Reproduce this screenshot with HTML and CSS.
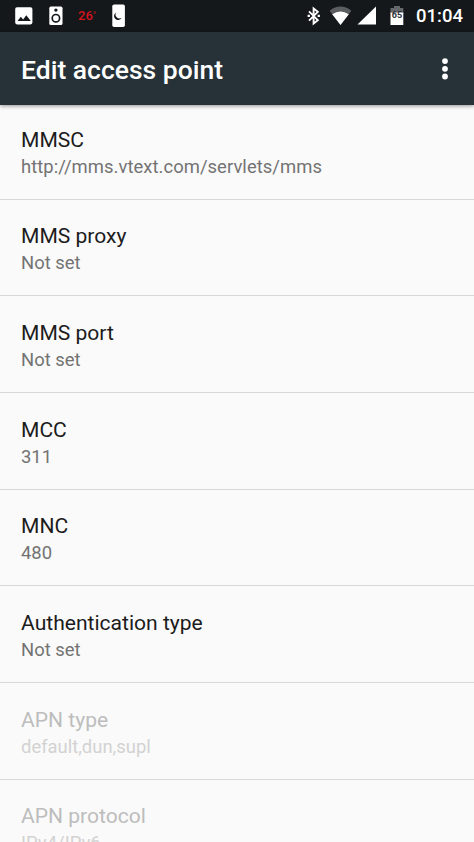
FILE: index.html
```html
<!DOCTYPE html>
<html lang="en">
<head>
<meta charset="utf-8">
<title>Edit access point</title>
<link rel="stylesheet" href="styles.css">
</head>
<body>
<div class="screen">
  <div class="status">
    <svg class="picture" width="18" height="18" viewBox="0 0 18 18"><rect x=".2" y=".2" width="17.2" height="17.2" rx="1.8" fill="#fff"/><path d="M2.5 14l3.3-4.3 2.3 2.8 3.2-4.2 4.5 5.7z" fill="#14181b"/></svg>
    <svg class="speaker" width="14" height="20" viewBox="0 0 14 20"><rect x=".3" y=".6" width="13.2" height="18.4" rx="1.6" fill="#fff"/><circle cx="6.9" cy="4.1" r="1.7" fill="#14181b"/><circle cx="6.9" cy="12.2" r="3.7" fill="none" stroke="#14181b" stroke-width="1.7"/></svg>
    <span class="temp">26<span class="degree">°</span></span>
    <svg class="night" width="14" height="24" viewBox="0 0 14 24"><rect x=".3" y=".4" width="12.6" height="22.6" rx="1.8" fill="#fff"/><path d="M4.2 8.4A3.9 3.9 0 0 0 9.6 13.8A4 4 0 1 1 4.2 8.4z" fill="#14181b"/></svg>
    <span class="spacer"></span>
    <svg class="bluetooth" width="14" height="20" viewBox="0 0 14 20"><path d="M2 5.4l8.8 8.8L6.6 17.6V2.4l4.2 3.4L2 14.6" fill="none" stroke="#fff" stroke-width="1.9"/><path d="M.6 8.8h2.3v2.3H.6zM10.6 8.8h2.3v2.3h-2.3z" fill="#fff"/></svg>
    <svg class="wifi" width="23" height="20" viewBox="0 0 23 20"><path d="M.6 4.8Q11.5-3.6 22.4 4.8L11.5 19z" fill="#5b5e60"/><path d="M3.2 8.2Q11.5 3 19.8 8.2L11.5 19z" fill="#fff"/></svg>
    <svg class="signal" width="20" height="20" viewBox="0 0 20 20"><path d="M19 .6V18.6H.5z" fill="#fff"/></svg>
    <span class="battery"><svg width="14" height="20" viewBox="0 0 14 20"><path d="M4 0h6v2h3.3v6H.5V2H4z" fill="#64686a"/><path d="M.5 6.6h12.8V19H.5z" fill="#fff"/></svg><span class="level">65</span></span>
    <span class="clock">01:04</span>
  </div>
  <header class="bar">
    <h1>Edit access point</h1>
    <svg width="8" height="24" viewBox="0 0 8 24"><g fill="#fff"><circle cx="4" cy="4.1" r="2.9"/><circle cx="4" cy="11.8" r="2.9"/><circle cx="4" cy="19.5" r="2.9"/></g></svg>
  </header>
  <main class="list">
    <div class="row"><div class="name">MMSC</div><div class="value url">http://mms.vtext.com/servlets/mms</div></div>
    <div class="row"><div class="name">MMS proxy</div><div class="value">Not set</div></div>
    <div class="row"><div class="name">MMS port</div><div class="value">Not set</div></div>
    <div class="row"><div class="name">MCC</div><div class="value">311</div></div>
    <div class="row"><div class="name">MNC</div><div class="value">480</div></div>
    <div class="row"><div class="name">Authentication type</div><div class="value">Not set</div></div>
    <div class="row disabled"><div class="name">APN type</div><div class="value">default,dun,supl</div></div>
    <div class="row disabled"><div class="name">APN protocol</div><div class="value">IPv4/IPv6</div></div>
  </main>
</div>
</body>
</html>
```
FILE: styles.css
```css
* { box-sizing: border-box; }
body { margin: 0; font-family: Roboto, "Liberation Sans", sans-serif; background: #fafafa; }
.screen { height: 842px; overflow: hidden; display: flex; flex-direction: column; }
.status { height: 32px; flex: none; display: flex; align-items: center; background: #14181b; padding: 0 11px 0 15px; color: #fff; }
.status svg { display: block; flex: none; }
.speaker { margin-left: 16px; }
.temp { margin-left: 15px; width: 19px; color: #d5141b; font-size: 13px; font-weight: 500; line-height: 32px; white-space: nowrap; }
.degree { font-size: 9px; font-weight: 400; vertical-align: 2px; line-height: 1; }
.night { margin-left: 15px; }
.spacer { flex: 1; }
.bluetooth { margin-right: 8px; }
.wifi { margin-right: 5px; }
.signal { margin-right: 13px; }
.battery { position: relative; margin-right: 12px; }
.level { position: absolute; left: 0; top: 4px; width: 14px; text-align: center; font-size: 9px; line-height: 11px; font-weight: 700; color: #2b3033; }
.clock { width: 47px; font-size: 18.5px; font-weight: 500; line-height: 32px; white-space: nowrap; }
.bar { height: 73px; flex: none; display: flex; align-items: center; justify-content: space-between; padding: 0 25px 0 21px; background: #263238; box-shadow: 0 1px 4px rgba(0,0,0,.42); z-index: 1; }
.bar h1 { margin: 2px 0 0; color: #fff; font-size: 26.5px; line-height: 32px; font-weight: 500; }
.list { flex: none; margin-top: -2px; }
.row { height: 96.7px; padding: 22.6px 21px 0; border-bottom: 1px solid #d8d8d8; }
.name { font-size: 21.07px; line-height: 28px; color: #1c1c1c; }
.value { font-size: 18.43px; line-height: 25px; color: #737373; }
.url { letter-spacing: .05px; }
.disabled .name { color: #bdbdbd; }
.disabled .value { color: #d2d2d2; }
```
